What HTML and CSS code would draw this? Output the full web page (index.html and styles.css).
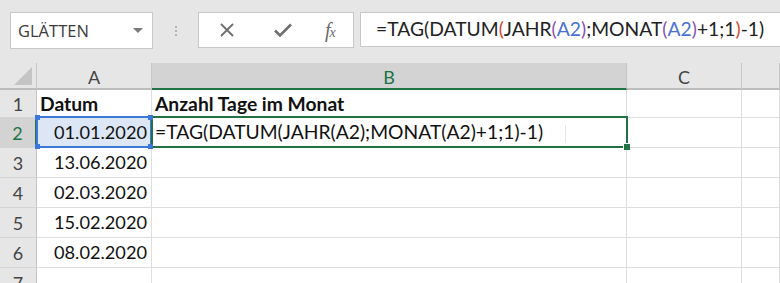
FILE: index.html
```html
<!DOCTYPE html>
<html lang="de">
<head>
    <meta charset="UTF-8">
    <title>Excel - TAG(DATUM())</title>
    <link rel="stylesheet" href="styles.css">
</head>
<body>
    <div class="toolbar">
        <div class="namebox">
            <span>GLÄTTEN</span>
            <span class="caret"></span>
        </div>
        <div class="dots"><i></i><i></i><i></i></div>
        <div class="fxbox">
            <svg class="icon" width="16" height="16" viewBox="0 0 16 16">
                <path d="M2 2 L14 14 M14 2 L2 14" stroke="#6e6e6e" stroke-width="1.8" fill="none"/>
            </svg>
            <svg class="icon" width="20" height="16" viewBox="0 0 20 16">
                <path d="M2 8.5 L7 13.5 L18 2.5" stroke="#6e6e6e" stroke-width="2.6" fill="none"/>
            </svg>
            <span class="fx"><i>f</i><i class="x">x</i></span>
        </div>
        <div class="formula">=TAG<span class="p1">(</span>DATUM<span class="p2">(</span>JAHR<span class="p3">(</span><span class="ref">A2</span><span class="p3">)</span>;MONAT<span class="p3">(</span><span class="ref">A2</span><span class="p3">)</span>+1;1<span class="p2">)</span>-1)</div>
    </div>

    <div class="sheet">
        <div class="hd corner"><span class="tri"></span></div>
        <div class="hd col">A</div>
        <div class="hd col sel">B</div>
        <div class="hd col">C</div>
        <div class="hd col"></div>

        <div class="hd row">1</div>
        <div class="cell bold">Datum</div>
        <div class="cell bold">Anzahl Tage im Monat</div>
        <div class="cell"></div>
        <div class="cell"></div>

        <div class="hd row sel">2</div>
        <div class="cell num ref-cell">01.01.2020<i class="h tl"></i><i class="h tr"></i><i class="h bl"></i><i class="h br"></i></div>
        <div class="cell active">=TAG(DATUM(JAHR(A2);MONAT(A2)+1;1)-1)<span class="ibeam"></span></div>
        <div class="cell"></div>
        <div class="cell"></div>

        <div class="hd row">3</div>
        <div class="cell num">13.06.2020</div>
        <div class="cell"></div>
        <div class="cell"></div>
        <div class="cell"></div>

        <div class="hd row">4</div>
        <div class="cell num">02.03.2020</div>
        <div class="cell"></div>
        <div class="cell"></div>
        <div class="cell"></div>

        <div class="hd row">5</div>
        <div class="cell num">15.02.2020</div>
        <div class="cell"></div>
        <div class="cell"></div>
        <div class="cell"></div>

        <div class="hd row">6</div>
        <div class="cell num">08.02.2020</div>
        <div class="cell"></div>
        <div class="cell"></div>
        <div class="cell"></div>

        <div class="hd row">7</div>
        <div class="cell"></div>
        <div class="cell"></div>
        <div class="cell"></div>
        <div class="cell"></div>
    </div>
</body>
</html>
```

FILE: styles.css
```css
body {
    margin: 0;
    width: 780px;
    height: 283px;
    overflow: hidden;
    background: #e6e6e6;
    font-family: Lato, "Liberation Sans", sans-serif;
}
.toolbar {
    height: 63px;
    display: flex;
    align-items: flex-start;
    padding: 12px 0 0 10px;
    box-sizing: border-box;
    overflow: hidden;
}
.toolbar > div { flex-shrink: 0; }
.namebox {
    width: 143px;
    height: 37px;
    box-sizing: border-box;
    background: white;
    border: 1px solid #c8c8c8;
    display: flex;
    align-items: center;
    justify-content: space-between;
    padding: 0 8px 0 7px;
    font-family: "Open Sans", sans-serif;
    font-size: 16.5px;
    color: #3a3a3a;
}
.caret {
    width: 0;
    height: 0;
    border-left: 5px solid transparent;
    border-right: 5px solid transparent;
    border-top: 5px solid #7a7a7a;
    margin-right: 1px;
}
.dots {
    width: 45px;
    height: 37px;
    display: flex;
    flex-direction: column;
    align-items: center;
    justify-content: center;
    gap: 2px;
}
.dots i {
    width: 2px;
    height: 2px;
    background: #b4b4b4;
}
.fxbox {
    width: 156px;
    height: 36px;
    box-sizing: border-box;
    background: white;
    border: 1px solid #c8c8c8;
    display: flex;
    align-items: center;
    padding-left: 20px;
    gap: 38px;
}
.icon { display: block; }
.fx {
    font-family: "Liberation Serif", serif;
    font-size: 20px;
    color: #6a6a6a;
    letter-spacing: -1px;
    margin-left: -6px;
}
.fx .x { font-size: 14px; }
.formula {
    margin-left: 6px;
    width: 440px;
    height: 35px;
    box-sizing: border-box;
    background: white;
    border: 1px solid #c8c8c8;
    border-right: none;
    padding: 4px 0 0 15px;
    font-size: 19.3px;
    color: #222;
    white-space: nowrap;
}
.p1 { color: #222; }
.p2 { color: #d8482b; }
.p3 { color: #8a4fb5; }
.ref { color: #4a72d3; }

.sheet {
    display: grid;
    grid-template-columns: 37px 115px 475px 115px 1fr;
    grid-template-rows: 27px 28px 30px 30px 30px 30px 30px 30px;
    background: white;
    font-size: 19.3px;
}
.hd {
    background: #e6e6e6;
    color: #444;
    font-size: 18px;
    display: flex;
    align-items: center;
    justify-content: center;
    box-sizing: border-box;
}
.col {
    border-right: 1px solid #c6c6c6;
    border-bottom: 2px solid #bdbdbd;
    padding-top: 2px;
}
.col.sel {
    background: #d3d3d3;
    color: #217346;
    border-bottom-color: #217346;
}
.corner {
    border-right: 1px solid #c6c6c6;
    border-bottom: 2px solid #bdbdbd;
    position: relative;
}
.tri {
    position: absolute;
    right: 4px;
    bottom: 3px;
    width: 0;
    height: 0;
    border-left: 18px solid transparent;
    border-bottom: 18px solid #c4c4c4;
}
.row {
    border-right: 1px solid #c6c6c6;
    border-bottom: 1px solid #d4d4d4;
}
.row.sel {
    background: #d3d3d3;
    color: #217346;
    border-right: 2px solid #217346;
}
.cell {
    border-right: 1px solid #dedede;
    border-bottom: 1px solid #dedede;
    padding: 2px 3px 0 3px;
    box-sizing: border-box;
    color: #111;
    white-space: nowrap;
    position: relative;
}
.bold { font-weight: bold; }
.num {
    text-align: right;
    padding: 3px 4px 0 3px;
    font-size: 18.2px;
}
.ref-cell { background: #dce6f4; }
.ref-cell::after {
    content: "";
    position: absolute;
    left: -1px;
    top: -2px;
    right: -1px;
    bottom: -1px;
    border: 2px solid #3c78d8;
}
.h {
    position: absolute;
    width: 5px;
    height: 5px;
    background: #3c78d8;
    z-index: 2;
}
.h.tl { left: -2px; top: -3px; }
.h.tr { right: -2px; top: -3px; }
.h.bl { left: -2px; bottom: -2px; }
.h.br { right: -2px; bottom: -2px; }
.active::after {
    content: "";
    position: absolute;
    left: -1px;
    top: -2px;
    right: -2px;
    bottom: -1px;
    border: 2px solid #217346;
}
.active::before {
    content: "";
    position: absolute;
    right: -4px;
    bottom: -3px;
    width: 6px;
    height: 6px;
    background: #217346;
    border-left: 1px solid white;
    border-top: 1px solid white;
    z-index: 2;
}
.ibeam {
    position: absolute;
    left: 413px;
    top: 7px;
    width: 1px;
    height: 18px;
    background: #e4e4e4;
}
```
